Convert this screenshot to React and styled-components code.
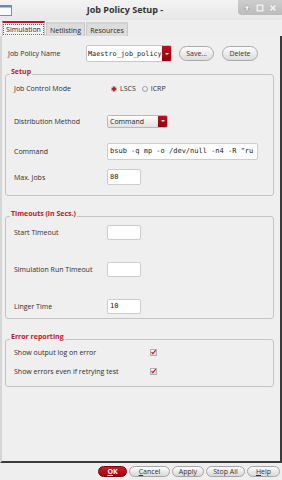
import styled, { createGlobalStyle } from "styled-components";

const GlobalStyle = createGlobalStyle`
  html, body { margin: 0; padding: 0; background: #eeeeee; }
  body {
    font-family: "Open Sans", "Noto Sans", sans-serif;
    font-size: 7px;
    color: #2e2e2e;
  }
  * { box-sizing: border-box; }
`;

const Window = styled.div`
  width: 282px;
  height: 480px;
  display: flex;
  flex-direction: column;
  background: #eeeeee;
  overflow: hidden;
`;

const TitleBar = styled.div`
  height: 20px;
  flex-shrink: 0;
  display: flex;
  align-items: flex-start;
  background: linear-gradient(#f3f3f3, #e7e7e7);
`;

const AppIcon = styled.div`
  width: 12px;
  height: 20px;
  display: flex;
  align-items: center;
`;

const Title = styled.div`
  flex: 1;
  text-align: center;
  font-weight: 700;
  font-size: 9px;
  line-height: 20px;
  color: #333;
`;

const WindowControls = styled.div`
  width: 44px;
  height: 15px;
  background: linear-gradient(#cdcdcd, #bcbcbc);
  border-bottom-left-radius: 4px;
  display: flex;
  align-items: center;
  justify-content: space-around;
  padding: 0 2px;
`;

const TabBar = styled.div`
  height: 16px;
  flex-shrink: 0;
  display: flex;
  align-items: flex-end;
  padding-left: 2px;
  gap: 1px;
`;

const Tab = styled.div`
  width: ${(p) => p.$w}px;
  height: ${(p) => (p.$active ? 15 : 14)}px;
  display: flex;
  align-items: center;
  justify-content: center;
  background: ${(p) => (p.$active ? "#f5f5f5" : "#dcdcdc")};
  border-top: 2px solid ${(p) => (p.$active ? "#c4142a" : "#d2d2d2")};
  border-left: 1px solid #c9c9c9;
  border-right: 1px solid #c9c9c9;
  font-size: 7px;
  color: #2a2a2a;
`;

const TabLabel = styled.span`
  border: 1px dotted ${(p) => (p.$focus ? "#666" : "transparent")};
  padding: 0 2px;
  line-height: 9px;
`;

const Pane = styled.div`
  flex: 1;
  display: flex;
  flex-direction: column;
  background: #efefef;
  border-left: 2px solid #d6d6d6;
  border-right: 2px solid #3a3a3a;
  border-bottom: 2px solid #3a3a3a;
  padding: 9px 6px 0 3px;
`;

const NameRow = styled.div`
  height: 17px;
  display: flex;
  align-items: center;
`;

const NameLabel = styled.span`
  width: 81px;
  padding-left: 3px;
`;

const Combo = styled.div`
  width: 86px;
  height: 17px;
  display: flex;
  border: 1px solid #c6c6c6;
  border-radius: 2px;
  background: #fff;
  overflow: hidden;
`;

const ComboText = styled.div`
  flex: 1;
  display: flex;
  align-items: center;
  padding-left: 1px;
  font-family: "DejaVu Sans Mono", "Liberation Mono", monospace;
  font-size: 6.8px;
  white-space: nowrap;
  overflow: hidden;
  color: #222;
`;

const DropArrow = styled.div`
  width: 9px;
  display: flex;
  align-items: center;
  justify-content: center;
  background: linear-gradient(#c0101c, #96000a);
  &::after {
    content: "";
    border-left: 2px solid transparent;
    border-right: 2px solid transparent;
    border-top: 2px solid #fff;
  }
`;

const PillButton = styled.button`
  width: ${(p) => p.$w}px;
  height: 15px;
  margin-left: ${(p) => p.$ml}px;
  padding: 0;
  border-radius: 8px;
  border: 1px solid #a9a9a9;
  background: linear-gradient(#fcfcfc, #dcdcdc);
  font-family: "Open Sans", "Noto Sans", sans-serif;
  font-size: 7px;
  color: #333;
`;

const Group = styled.fieldset`
  margin: ${(p) => p.$mt}px 0 0 0;
  padding: 0 8px ${(p) => p.$pb}px 8px;
  border: 1px solid #c4c4c4;
  border-radius: 3px;
  min-width: 0;
`;

const Legend = styled.legend`
  margin-left: -4px;
  padding: 0 1px 4px;
  font-weight: 700;
  font-size: 7px;
  line-height: 8px;
  color: #c4142a;
`;

const Row = styled.div`
  display: grid;
  grid-template-columns: ${(p) => p.$label}px auto;
  align-items: center;
  height: ${(p) => p.$h}px;
  margin-top: ${(p) => p.$mt || 0}px;
`;

const Field = styled.div`
  width: ${(p) => p.$w}px;
  height: ${(p) => p.$h}px;
  background: #fff;
  border: 1px solid #cdcdcd;
  border-radius: 2px;
  display: flex;
  align-items: center;
  padding-left: 2px;
  font-family: "DejaVu Sans Mono", "Liberation Mono", monospace;
  font-size: 7px;
  white-space: nowrap;
  overflow: hidden;
  color: #222;
`;

const RadioGroup = styled.div`
  display: flex;
  align-items: center;
  padding-left: 4px;
  gap: 6px;
`;

const RadioItem = styled.label`
  display: flex;
  align-items: center;
  gap: 3px;
`;

const RadioDot = styled.span`
  width: 6px;
  height: 6px;
  border-radius: 50%;
  border: 1px solid #a0a0a0;
  background: ${(p) =>
    p.$on
      ? "radial-gradient(circle, #c4142a 0 1.6px, #fff 1.9px)"
      : "linear-gradient(#fff, #e4e4e4)"};
`;

const Select = styled.div`
  width: 61px;
  height: 13px;
  display: flex;
  border: 1px solid #b8b8b8;
  border-radius: 2px;
  overflow: hidden;
`;

const SelectText = styled.div`
  flex: 1;
  display: flex;
  align-items: center;
  padding-left: 2px;
  background: linear-gradient(#fdfdfd, #e2e2e2);
  color: #222;
`;

const Check = styled.span`
  width: 7px;
  height: 7px;
  border: 1px solid #b0b0b0;
  background: linear-gradient(#fafafa, #dadada);
  display: flex;
  align-items: center;
  justify-content: center;
`;

const ButtonBar = styled.div`
  height: 17px;
  flex-shrink: 0;
  display: flex;
  justify-content: flex-end;
  align-items: center;
  gap: 2px;
  padding-right: 2px;
`;

const DialogButton = styled.button`
  width: ${(p) => p.$w}px;
  height: 11px;
  padding: 0;
  border-radius: 6px;
  border: 1px solid ${(p) => (p.$primary ? "#7a0008" : "#a5a5a5")};
  background: ${(p) =>
    p.$primary
      ? "linear-gradient(#d2182a, #a2000e)"
      : "linear-gradient(#fcfcfc, #d9d9d9)"};
  color: ${(p) => (p.$primary ? "#fff" : "#333")};
  font-family: "Open Sans", "Noto Sans", sans-serif;
  font-weight: ${(p) => (p.$primary ? 700 : 400)};
  font-size: 7px;
  line-height: 9px;
  u { text-decoration: underline; }
`;

function CheckMark() {
  return (
    <svg width="6" height="6" viewBox="0 0 6 6">
      <path d="M0.6 3.2 L2.3 4.9 L5.6 0.8" fill="none" stroke="#c4142a" strokeWidth="1.4" />
    </svg>
  );
}

function WinIcon() {
  return (
    <svg width="12" height="11" viewBox="0 0 12 11">
      <rect x="-1" y="0.5" width="12.5" height="10" fill="#fafafa" stroke="#7f8fa6" />
      <rect x="-1" y="0.5" width="12.5" height="2" fill="#6d86aa" />
    </svg>
  );
}

function CtlIcon({ kind }) {
  return (
    <svg width="8" height="8" viewBox="0 0 8 8">
      {kind === "up" && <path d="M4 1 L7 4.5 H5 V7 H3 V4.5 H1 Z" fill="#f2f2f2" stroke="#9a9a9a" strokeWidth="0.6" />}
      {kind === "max" && <rect x="1.2" y="1.2" width="5.6" height="5.6" fill="none" stroke="#f2f2f2" strokeWidth="1.3" />}
      {kind === "close" && <path d="M1.5 1.5 L6.5 6.5 M6.5 1.5 L1.5 6.5" stroke="#f2f2f2" strokeWidth="1.5" />}
    </svg>
  );
}

export default function App() {
  return (
    <>
      <GlobalStyle />
      <Window>
        <TitleBar>
          <AppIcon><WinIcon /></AppIcon>
          <Title>Job Policy Setup -</Title>
          <WindowControls>
            <CtlIcon kind="up" />
            <CtlIcon kind="max" />
            <CtlIcon kind="close" />
          </WindowControls>
        </TitleBar>

        <TabBar>
          <Tab $active $w={43}><TabLabel $focus>Simulation</TabLabel></Tab>
          <Tab $w={39}><TabLabel>Netlisting</TabLabel></Tab>
          <Tab $w={42}><TabLabel>Resources</TabLabel></Tab>
        </TabBar>

        <Pane>
          <NameRow>
            <NameLabel>Job Policy Name</NameLabel>
            <Combo>
              <ComboText>Maestro_job_policy</ComboText>
              <DropArrow />
            </Combo>
            <PillButton $w={35} $ml={7}>Save...</PillButton>
            <PillButton $w={36} $ml={8}>Delete</PillButton>
          </NameRow>

          <Group $mt={6} $pb={9}>
            <Legend>Setup</Legend>
            <Row $label={93} $h={17}>
              <span>Job Control Mode</span>
              <RadioGroup>
                <RadioItem><RadioDot $on />LSCS</RadioItem>
                <RadioItem><RadioDot />ICRP</RadioItem>
              </RadioGroup>
            </Row>
            <Row $label={93} $h={18} $mt={15}>
              <span>Distribution Method</span>
              <Select>
                <SelectText>Command</SelectText>
                <DropArrow />
              </Select>
            </Row>
            <Row $label={93} $h={18} $mt={12}>
              <span>Command</span>
              <Field $w={151} $h={17}>bsub -q mp -o /dev/null -n4 -R "ru</Field>
            </Row>
            <Row $label={93} $h={18} $mt={8}>
              <span>Max. Jobs</span>
              <Field $w={34} $h={16}>80</Field>
            </Row>
          </Group>

          <Group $mt={14} $pb={3}>
            <Legend>Timeouts (in Secs.)</Legend>
            <Row $label={93} $h={18} $mt={1}>
              <span>Start Timeout</span>
              <Field $w={34} $h={15} />
            </Row>
            <Row $label={93} $h={18} $mt={19}>
              <span>Simulation Run Timeout</span>
              <Field $w={34} $h={15} />
            </Row>
            <Row $label={93} $h={18} $mt={19}>
              <span>Linger Time</span>
              <Field $w={34} $h={15}>10</Field>
            </Row>
          </Group>

          <Group $mt={14} $pb={8}>
            <Legend>Error reporting</Legend>
            <Row $label={136} $h={14}>
              <span>Show output log on error</span>
              <Check><CheckMark /></Check>
            </Row>
            <Row $label={136} $h={14} $mt={5}>
              <span>Show errors even if retrying test</span>
              <Check><CheckMark /></Check>
            </Row>
          </Group>
        </Pane>

        <ButtonBar>
          <DialogButton $primary $w={29}><u>O</u>K</DialogButton>
          <DialogButton $w={41}><u>C</u>ancel</DialogButton>
          <DialogButton $w={32}>Apply</DialogButton>
          <DialogButton $w={39}>Stop All</DialogButton>
          <DialogButton $w={33}><u>H</u>elp</DialogButton>
        </ButtonBar>
      </Window>
    </>
  );
}
